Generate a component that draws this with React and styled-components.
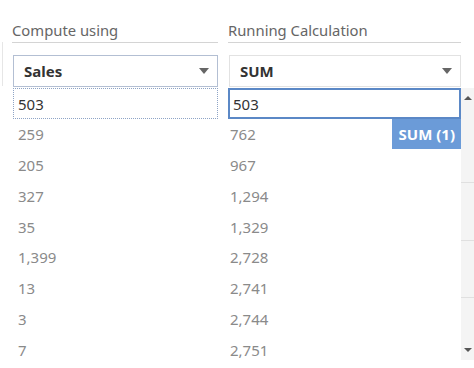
import React from "react";
import styled, { createGlobalStyle } from "styled-components";

const GlobalStyle = createGlobalStyle`
  html, body {
    margin: 0;
    padding: 0;
    background: #fff;
  }
  body {
    font-family: "Noto Sans", "Open Sans", sans-serif;
    width: 474px;
    height: 368px;
    overflow: hidden;
  }
`;

const Page = styled.div`
  display: flex;
  align-items: flex-start;
  padding-top: 20px;
  height: 348px;
`;

// 앞 열의 가장자리만 살짝 보이는 부분
const Stub = styled.div`
  width: 12px;
  flex: none;
  padding-top: 22px;
  div {
    width: 2px;
    height: 44px;
    border-right: 1px solid #e6e6e6;
  }
`;

const Column = styled.div`
  width: ${(p) => p.$w}px;
  flex: none;
  margin-right: ${(p) => p.$gap || 0}px;
  position: relative;
`;

const Label = styled.div`
  font-size: 14.8px;
  color: #666;
  height: 22px;
  line-height: 20px;
  border-bottom: 1px solid #d4d4d4;
  margin-bottom: 12px;
  white-space: nowrap;
`;

const Select = styled.div`
  height: 30px;
  display: flex;
  align-items: center;
  justify-content: space-between;
  padding: 0 8px 0 10px;
  border: 1px solid ${(p) => (p.$focus ? "#b3bfd3" : "#e2e2e2")};
  font-size: 15px;
  font-weight: 700;
  color: #333;
  margin-left: 1px;
`;

const Caret = styled.span`
  width: 0;
  height: 0;
  border-left: 5px solid transparent;
  border-right: 5px solid transparent;
  border-top: 6px solid #666;
`;

const Cell = styled.div`
  height: ${(p) => (p.$active ? 27 : 29)}px;
  margin-top: 1px;
  margin-left: ${(p) => (p.$active ? 0 : 1)}px;
  display: flex;
  align-items: center;
  padding-left: ${(p) => (p.$active ? 3 : 4)}px;
  font-size: 15px;
  color: #333;
  border: ${(p) => (p.$active ? "2px solid #5b88c6" : "1px dotted #8ea4c6")};
`;

const Row = styled.div`
  height: 30.75px;
  display: flex;
  align-items: center;
  padding-left: ${(p) => p.$pad}px;
  font-size: 15px;
  color: #8a8a8a;
`;

const Badge = styled.div`
  position: absolute;
  right: -1px;
  top: 99px;
  height: 30px;
  padding: 0 7px;
  display: flex;
  align-items: center;
  background: #6b9bd8;
  color: #fff;
  font-size: 15px;
  font-weight: 700;
`;

const Scroll = styled.div`
  width: 13px;
  flex: none;
  margin-top: 68px;
  height: 272px;
  background: #f4f4f4;
  display: flex;
  flex-direction: column;
  justify-content: space-between;
  align-items: center;
  position: relative;
`;

const Arrow = styled.span`
  width: 0;
  height: 0;
  margin: ${(p) => (p.$up ? "8px 0 0" : "0 0 8px")};
  border-left: 4px solid transparent;
  border-right: 4px solid transparent;
  ${(p) => (p.$up ? "border-bottom: 4px solid #555;" : "border-top: 4px solid #555;")}
`;

const Rule = styled.div`
  position: absolute;
  left: 0;
  right: 0;
  top: ${(p) => p.$y}px;
  border-top: 1px solid #e0e0e0;
`;

const sales = ["259", "205", "327", "35", "1,399", "13", "3", "7"];
const running = ["762", "967", "1,294", "1,329", "2,728", "2,741", "2,744", "2,751"];

export default function App() {
  return (
    <>
      <GlobalStyle />
      <Page>
        <Stub>
          <div />
        </Stub>
        <Column $w={206} $gap={10}>
          <Label>Compute using</Label>
          <Select $focus>
            Sales
            <Caret />
          </Select>
          <Cell>503</Cell>
          {sales.map((v, i) => (
            <Row key={i} $pad={6}>
              {v}
            </Row>
          ))}
        </Column>
        <Column $w={233}>
          <Label>Running Calculation</Label>
          <Select>
            SUM
            <Caret />
          </Select>
          <Cell $active>503</Cell>
          {running.map((v, i) => (
            <Row key={i} $pad={2}>
              {v}
            </Row>
          ))}
          <Badge>SUM (1)</Badge>
        </Column>
        <Scroll>
          <Arrow $up />
          <Rule $y={94} />
          <Rule $y={152} />
          <Rule $y={209} />
          <Arrow />
        </Scroll>
      </Page>
    </>
  );
}
